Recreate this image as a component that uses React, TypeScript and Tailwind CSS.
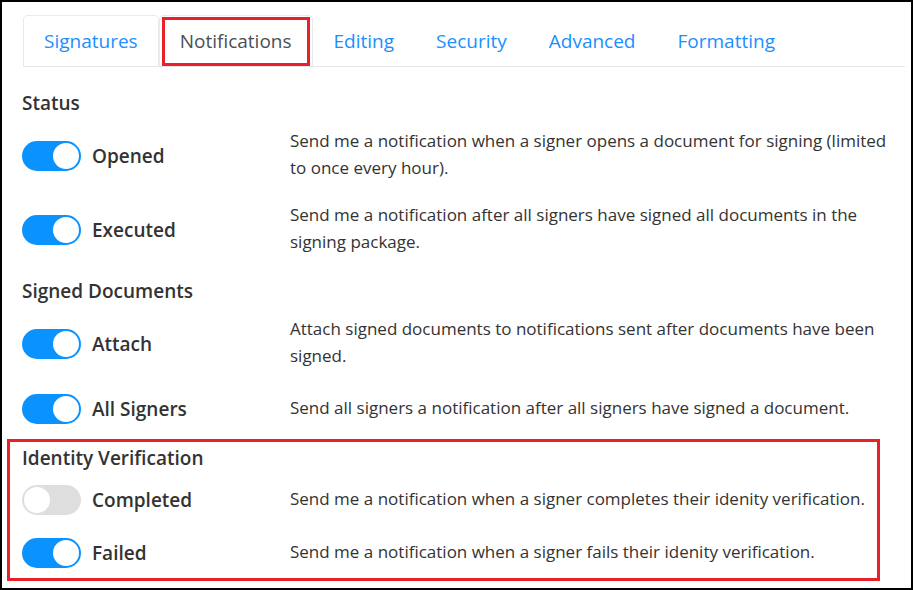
import React from 'react';

type Row = { label: string; on: boolean; desc: string; mt: string };

const tabs = ['Signatures', 'Notifications', 'Editing', 'Security', 'Advanced', 'Formatting'];

const Toggle = ({ on }: { on: boolean }) => (
  <div
    className={
      'flex h-[30px] w-[59px] shrink-0 items-center rounded-full px-[2px] ' +
      (on ? 'justify-end bg-[#0a93ff]' : 'justify-start bg-[#dedede]')
    }
  >
    <div className="h-[26px] w-[26px] rounded-full bg-white" />
  </div>
);

const SettingRow = ({ row }: { row: Row }) => (
  <div className={'flex items-center ' + row.mt}>
    <div className="mt-[4px] flex w-[268px] shrink-0 items-center gap-[11px]">
      <Toggle on={row.on} />
      <span className="text-[19px] font-semibold text-[#333]">{row.label}</span>
    </div>
    <p className="w-[606px] text-[17px] leading-[27px] text-[#333]">{row.desc}</p>
  </div>
);

const Heading = ({ children, mt }: { children: React.ReactNode; mt: string }) => (
  <h3 className={'text-[19px] font-semibold leading-[24px] text-[#333] ' + mt}>{children}</h3>
);

const App = () => {
  return (
    <div
      className="box-border h-[590px] w-[913px] overflow-hidden border-2 border-black bg-white pl-[20px] pr-[6px] pt-[13px]"
      style={{ fontFamily: '"Open Sans", "Noto Sans", sans-serif' }}
    >
      <div className="ml-[1px] flex h-[52px] border-b border-[#e4e6e8]">
        {tabs.map((t, i) => (
          <div
            key={t}
            className={
              'relative -mb-px flex h-[52px] items-center px-[20px] text-[19px] ' +
              (i < 2 ? 'rounded-t-[5px] border border-b-0 border-[#e8eaec] ' : 'border border-transparent ') +
              (i === 1 ? 'text-[#4a4f55]' : 'text-[#1a8fff]')
            }
          >
            {t}
            {i === 1 && (
              <div className="absolute left-[2px] right-[2px] top-[1px] bottom-[1px] border-[3px] border-[#e8202a]" />
            )}
          </div>
        ))}
      </div>

      <Heading mt="mt-[24px]">Status</Heading>
      <SettingRow
        row={{
          label: 'Opened',
          on: true,
          mt: 'mt-[12px]',
          desc: 'Send me a notification when a signer opens a document for signing (limited to once every hour).',
        }}
      />
      <SettingRow
        row={{
          label: 'Executed',
          on: true,
          mt: 'mt-[20px]',
          desc: 'Send me a notification after all signers have signed all documents in the signing package.',
        }}
      />

      <Heading mt="mt-[24px]">Signed Documents</Heading>
      <SettingRow
        row={{
          label: 'Attach',
          on: true,
          mt: 'mt-[12px]',
          desc: 'Attach signed documents to notifications sent after documents have been signed.',
        }}
      />
      <SettingRow
        row={{
          label: 'All Signers',
          on: true,
          mt: 'mt-[21px]',
          desc: 'Send all signers a notification after all signers have signed a document.',
        }}
      />

      <div className="-ml-[15px] mt-[15px] box-border h-[142px] w-[873px] border-[3px] border-[#e8202a] pl-[12px] pt-[4px]">
        <Heading mt="mt-0">Identity Verification</Heading>
        <SettingRow
          row={{
            label: 'Completed',
            on: false,
            mt: 'mt-[11px]',
            desc: 'Send me a notification when a signer completes their idenity verification.',
          }}
        />
        <SettingRow
          row={{
            label: 'Failed',
            on: true,
            mt: 'mt-[19px]',
            desc: 'Send me a notification when a signer fails their idenity verification.',
          }}
        />
      </div>
    </div>
  );
};

export default App;
